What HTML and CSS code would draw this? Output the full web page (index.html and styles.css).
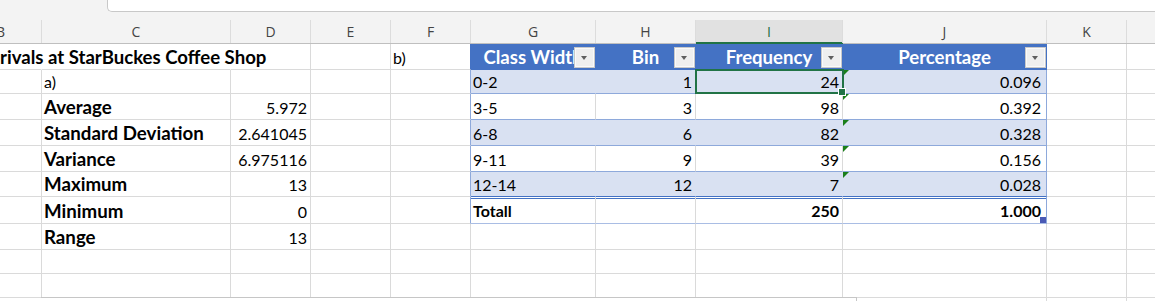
FILE: index.html
```html
<!DOCTYPE html>
<html lang="en">
<head>
    <meta charset="UTF-8">
    <title>StarBuckes Coffee Shop - Arrivals</title>
    <link rel="stylesheet" href="styles.css">
</head>
<body>
    <div class="topbar"><div class="fbox"></div></div>

    <div class="colheads">
        <div class="ch cut"><span>B</span></div>
        <div class="ch">C</div>
        <div class="ch">D</div>
        <div class="ch">E</div>
        <div class="ch">F</div>
        <div class="ch">G</div>
        <div class="ch">H</div>
        <div class="ch sel">I</div>
        <div class="ch">J</div>
        <div class="ch">K</div>
        <div class="ch"></div>
    </div>

    <!-- row 1: title + table header -->
    <div class="row h26">
        <div class="c title"><span>rivals at StarBuckes Coffee Shop</span></div>
        <div class="c nob"></div>
        <div class="c"></div>
        <div class="c"></div>
        <div class="c edge-h">b)</div>
        <div class="c th">Class Width<i class="dd"></i></div>
        <div class="c th">Bin<i class="dd"></i></div>
        <div class="c th">Frequency<i class="dd"></i></div>
        <div class="c th">Percentage<i class="dd"></i></div>
        <div class="c"></div>
        <div class="c"></div>
    </div>

    <div class="row h24">
        <div class="c"></div>
        <div class="c">a)</div>
        <div class="c"></div>
        <div class="c"></div>
        <div class="c edge"></div>
        <div class="c t band">0-2</div>
        <div class="c t band num">1</div>
        <div class="c t band num active">24<i class="selbox"></i><i class="handle"></i></div>
        <div class="c t band num last">0.096<i class="tri"></i></div>
        <div class="c"></div>
        <div class="c"></div>
    </div>

    <div class="row h26">
        <div class="c"></div>
        <div class="c lbl">Average</div>
        <div class="c num">5.972</div>
        <div class="c"></div>
        <div class="c edge"></div>
        <div class="c t">3-5</div>
        <div class="c t num">3</div>
        <div class="c t num">98</div>
        <div class="c t num last">0.392<i class="tri"></i></div>
        <div class="c"></div>
        <div class="c"></div>
    </div>

    <div class="row h26">
        <div class="c"></div>
        <div class="c lbl">Standard Deviation</div>
        <div class="c num">2.641045</div>
        <div class="c"></div>
        <div class="c edge"></div>
        <div class="c t band">6-8</div>
        <div class="c t band num">6</div>
        <div class="c t band num">82</div>
        <div class="c t band num last">0.328<i class="tri"></i></div>
        <div class="c"></div>
        <div class="c"></div>
    </div>

    <div class="row h26">
        <div class="c"></div>
        <div class="c lbl">Variance</div>
        <div class="c num">6.975116</div>
        <div class="c"></div>
        <div class="c edge"></div>
        <div class="c t">9-11</div>
        <div class="c t num">9</div>
        <div class="c t num">39</div>
        <div class="c t num last">0.156<i class="tri"></i></div>
        <div class="c"></div>
        <div class="c"></div>
    </div>

    <div class="row h25">
        <div class="c"></div>
        <div class="c lbl">Maximum</div>
        <div class="c num">13</div>
        <div class="c"></div>
        <div class="c edge"></div>
        <div class="c t band pre">12-14</div>
        <div class="c t band num pre">12</div>
        <div class="c t band num pre">7</div>
        <div class="c t band num pre last">0.028<i class="tri"></i></div>
        <div class="c"></div>
        <div class="c"></div>
    </div>

    <div class="row h27">
        <div class="c"></div>
        <div class="c lbl">Minimum</div>
        <div class="c num">0</div>
        <div class="c"></div>
        <div class="c edge"></div>
        <div class="c t total">Totall</div>
        <div class="c t total"></div>
        <div class="c t total num">250</div>
        <div class="c t total num last">1.000<i class="rh"></i></div>
        <div class="c"></div>
        <div class="c"></div>
    </div>

    <div class="row h26">
        <div class="c"></div>
        <div class="c lbl">Range</div>
        <div class="c num">13</div>
        <div class="c"></div>
        <div class="c"></div>
        <div class="c"></div>
        <div class="c"></div>
        <div class="c"></div>
        <div class="c"></div>
        <div class="c"></div>
        <div class="c"></div>
    </div>

    <div class="row h24">
        <div class="c"></div><div class="c"></div><div class="c"></div><div class="c"></div>
        <div class="c"></div><div class="c"></div><div class="c"></div><div class="c"></div>
        <div class="c"></div><div class="c"></div><div class="c"></div>
    </div>

    <div class="row h24">
        <div class="c"></div><div class="c"></div><div class="c"></div><div class="c"></div>
        <div class="c"></div><div class="c"></div><div class="c"></div><div class="c"></div>
        <div class="c"></div><div class="c"></div><div class="c"></div>
    </div>

    <div class="row h4">
        <div class="c"></div><div class="c"></div><div class="c"></div><div class="c"></div>
        <div class="c"></div><div class="c"></div><div class="c"></div><div class="c"></div>
        <div class="c"></div><div class="c"></div><div class="c"></div>
    </div>

    <div class="hscroll"></div>
</body>
</html>
```

FILE: styles.css
```css
:root {
    --cols: 42px 189px 80px 80px 80px 125px 100px 147px 204px 80px 1fr;
    --grid: #dadada;
    --blue: #4472c4;
    --band: #d9e1f2;
    --band-line: #8ea9db;
    --green: #217346;
}
* {
    box-sizing: border-box;
}
body {
    margin: 0;
    width: 1155px;
    height: 301px;
    overflow: hidden;
    position: relative;
    background: #fff;
    font-family: Lato, "Liberation Sans", sans-serif;
    color: #000;
}

/* formula bar edge + column letters */
.topbar {
    height: 12px;
    background: #f3f3f3;
}
.fbox {
    margin-left: 107px;
    height: 12px;
    background: #fff;
    border-left: 1px solid #c8c8c8;
    border-bottom: 1px solid #c8c8c8;
    border-bottom-left-radius: 5px;
}
.colheads {
    display: grid;
    grid-template-columns: var(--cols);
    height: 32px;
    padding-top: 8px;
    background: #f3f3f3;
    border-bottom: 1px solid #bfbfbf;
}
.ch {
    display: flex;
    align-items: center;
    justify-content: center;
    border-right: 1px solid #dcdcdc;
    font-family: "Open Sans", sans-serif;
    font-size: 14px;
    color: #444;
    overflow: hidden;
}
.ch:last-child {
    border-right: none;
}
.ch.cut {
    justify-content: flex-start;
}
.ch.cut span {
    margin-left: -4px;
}
.ch.sel {
    background: #e1e1e1;
    color: #1e6b41;
    box-shadow: inset 0 -1px 0 var(--green), 0 1px 0 var(--green);
}

/* cells */
.row {
    display: grid;
    grid-template-columns: var(--cols);
}
.h4 { height: 4px; }
.h24 { height: 24px; }
.h25 { height: 25px; }
.h26 { height: 26px; }
.h27 { height: 27px; }

.c {
    position: relative;
    display: flex;
    align-items: flex-end;
    padding: 0 3px 2px 2px;
    border-right: 1px solid var(--grid);
    border-bottom: 1px solid var(--grid);
    font-size: 16px;
    line-height: 18px;
    white-space: nowrap;
    overflow: hidden;
}
.row > .c:last-child {
    border-right: none;
}
.h4 > .c {
    border-bottom: none;
}
.num {
    justify-content: flex-end;
}
.lbl {
    padding-bottom: 3px;
    font-weight: 700;
    font-size: 18.7px;
}
.title {
    overflow: visible;
    padding-left: 0;
    padding-bottom: 3px;
    border-right-color: transparent;
    font-weight: 700;
    font-size: 18.6px;
}
.nob {
    border-right-color: transparent;
}

/* table */
.edge-h {
    border-right-color: var(--blue);
}
.edge {
    border-right-color: var(--band-line);
}
.th {
    justify-content: center;
    padding: 0 0 3px;
    background: var(--blue);
    border-right-color: var(--blue);
    border-bottom-color: var(--blue);
    color: #fff;
    font-weight: 700;
    font-size: 18.6px;
}
.dd {
    position: absolute;
    right: 0;
    top: 3px;
    width: 21px;
    height: 21px;
    background: #efefef;
    border: 1px solid #c9c9c9;
    box-shadow: inset 0 0 0 1px #fafafa;
}
.dd::after {
    content: "";
    position: absolute;
    left: 6px;
    top: 8px;
    border-left: 3.5px solid transparent;
    border-right: 3.5px solid transparent;
    border-top: 4px solid #5f5f5f;
}
.t {
    border-bottom-color: var(--band-line);
}
.t.band {
    background: var(--band);
    border-right-color: transparent;
}
.t.last {
    padding-right: 5px;
    border-right-color: var(--band-line);
}
.t.pre {
    border-bottom-color: var(--blue);
}
.t.total {
    padding-bottom: 3px;
    font-weight: 700;
    border-bottom-color: #a9bde4;
    box-shadow: inset 0 1px 0 #fff, inset 0 2px 0 var(--blue);
}

.active {
    overflow: visible;
    z-index: 2;
}
.selbox {
    position: absolute;
    left: -1px;
    top: -1px;
    right: -2px;
    bottom: -1px;
    border: 2px solid var(--green);
}
.handle {
    position: absolute;
    right: -4px;
    bottom: -3px;
    width: 8px;
    height: 8px;
    background: var(--green);
    border: 1px solid #fff;
}
.tri {
    position: absolute;
    left: 0;
    top: 0;
    border-top: 6px solid #1a7f1a;
    border-right: 6px solid transparent;
}
.rh {
    position: absolute;
    right: 0;
    bottom: 0;
    width: 6px;
    height: 6px;
    background: #4a5ab5;
}

.hscroll {
    position: absolute;
    left: 41px;
    top: 297px;
    width: 816px;
    height: 4px;
    background: #fff;
    border-top: 1px solid #c6c6c6;
    border-right: 1px solid #c6c6c6;
}
```
